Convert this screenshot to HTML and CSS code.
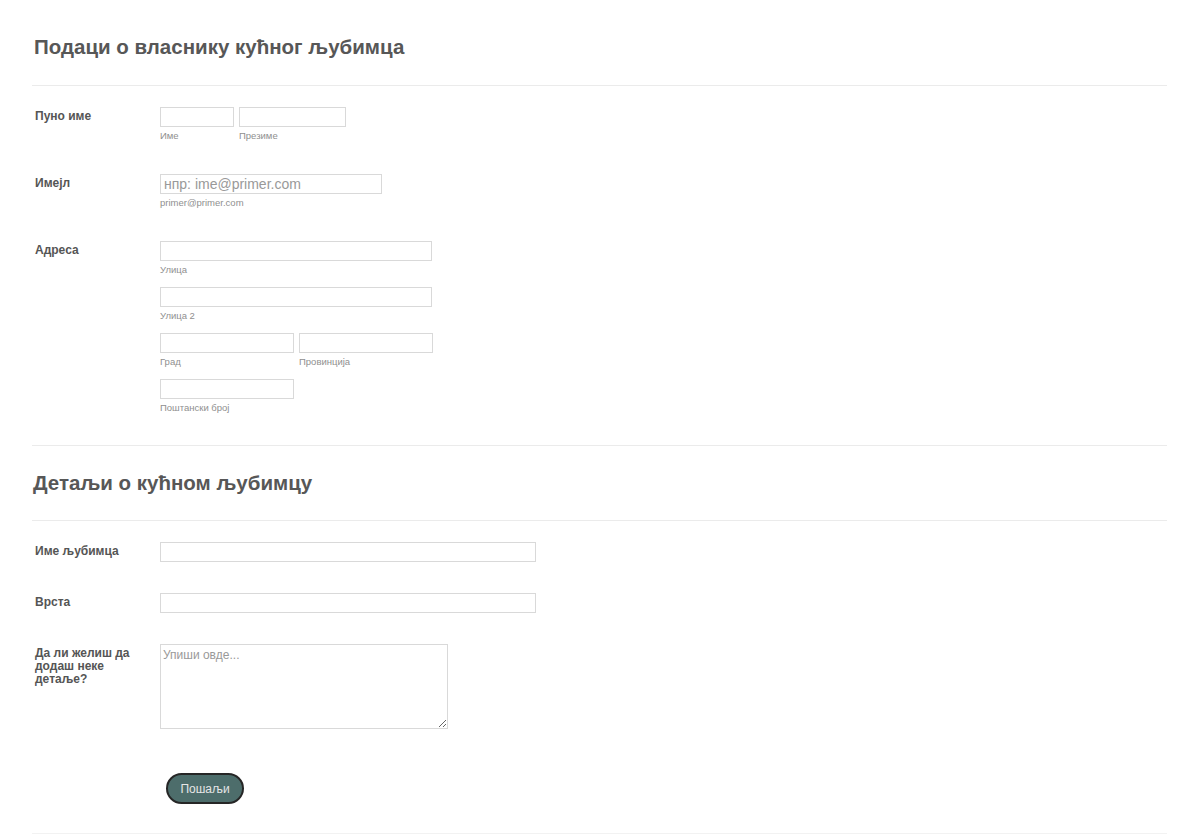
FILE: index.html
```
<!DOCTYPE html>
<html lang="sr">
<head>
<meta charset="utf-8">
<title>Форма</title>
<link rel="stylesheet" href="styles.css">
</head>
<body>
<form class="form">
  <div class="section-head">
    <h2 class="title">Подаци о власнику кућног љубимца</h2>
  </div>

  <div class="row">
    <label class="lbl">Пуно име</label>
    <div class="field">
      <div class="line">
        <div class="part">
          <input class="inp w-first" type="text">
          <span class="sub">Име</span>
        </div>
        <div class="part">
          <input class="inp w-last" type="text">
          <span class="sub">Презиме</span>
        </div>
      </div>
    </div>
  </div>

  <div class="row">
    <label class="lbl">Имејл</label>
    <div class="field">
      <div class="part">
        <input class="inp w-email" type="text" placeholder="нпр: ime@primer.com">
        <span class="sub">primer@primer.com</span>
      </div>
    </div>
  </div>

  <div class="row row-address">
    <label class="lbl">Адреса</label>
    <div class="field">
      <div class="part">
        <input class="inp w-street" type="text">
        <span class="sub">Улица</span>
      </div>
      <div class="part next">
        <input class="inp w-street" type="text">
        <span class="sub">Улица 2</span>
      </div>
      <div class="line next">
        <div class="part">
          <input class="inp w-city" type="text">
          <span class="sub">Град</span>
        </div>
        <div class="part">
          <input class="inp w-city" type="text">
          <span class="sub">Провинција</span>
        </div>
      </div>
      <div class="part next">
        <input class="inp w-city" type="text">
        <span class="sub">Поштански број</span>
      </div>
    </div>
  </div>

  <div class="section-head second">
    <h2 class="title">Детаљи о кућном љубимцу</h2>
  </div>

  <div class="row row-tight">
    <label class="lbl">Име љубимца</label>
    <div class="field">
      <input class="inp w-long" type="text">
    </div>
  </div>

  <div class="row row-tight">
    <label class="lbl">Врста</label>
    <div class="field">
      <input class="inp w-long" type="text">
    </div>
  </div>

  <div class="row row-tight">
    <label class="lbl">Да ли желиш да додаш неке детаље?</label>
    <div class="field">
      <textarea class="area" placeholder="Упиши овде..."></textarea>
    </div>
  </div>

  <div class="submit-row">
    <button class="btn" type="button">Пошаљи</button>
  </div>
</form>
</body>
</html>
```

FILE: styles.css
```
* {
  box-sizing: border-box;
}

html, body {
  margin: 0;
  padding: 0;
  background: #ffffff;
}

body {
  font-family: "Liberation Sans", Arial, sans-serif;
  color: #555555;
}

.form {
  width: 1135px;
  margin-left: 32px;
  padding-top: 10px;
}

.section-head {
  padding: 25px 0 26px 2px;
  border-bottom: 1px solid #ebebeb;
}

.section-head.second {
  border-top: 1px solid #ebebeb;
  padding: 25px 0 25px 1px;
}

.title {
  margin: 0;
  font-size: 20.5px;
  line-height: 24px;
  font-weight: bold;
  color: #575757;
}

.row {
  display: flex;
  padding: 21px 0 11px;
}

.row-address {
  padding-bottom: 31px;
}

.row-tight {
  padding-bottom: 10px;
}

.lbl {
  flex: none;
  width: 128px;
  padding: 3px 20px 0 3px;
  font-size: 12px;
  line-height: 13px;
  font-weight: bold;
  color: #555555;
}

.field {
  display: flex;
  flex-direction: column;
}

.line {
  display: flex;
  gap: 5px;
}

.part {
  display: flex;
  flex-direction: column;
}

.next {
  margin-top: 11px;
}

.inp {
  height: 20px;
  margin: 0;
  padding: 0 3px;
  border: 1px solid #d9d9d9;
  border-radius: 0;
  background: #ffffff;
  font-family: "Liberation Sans", Arial, sans-serif;
  font-size: 14px;
  color: #555555;
  outline: none;
}

.inp::placeholder,
.area::placeholder {
  color: #999999;
}

.w-first { width: 74px; }
.w-last { width: 107px; }
.w-email { width: 222px; }
.w-street { width: 272px; }
.w-city { width: 134px; }
.w-long { width: 376px; }

.sub {
  margin-top: 3px;
  font-size: 9.5px;
  line-height: 12px;
  color: #8f8f8f;
}

.area {
  display: block;
  width: 288px;
  height: 85px;
  margin: 0;
  padding: 3px 2px;
  border: 1px solid #d9d9d9;
  border-radius: 0;
  font-family: "Liberation Sans", Arial, sans-serif;
  font-size: 12px;
  color: #555555;
  outline: none;
}

.submit-row {
  padding: 34px 0 29px 134px;
  border-bottom: 1px solid #f2f2f2;
}

.btn {
  display: block;
  width: 78px;
  height: 31px;
  margin: 0;
  padding: 0;
  border: 2px solid #262626;
  border-radius: 16px;
  background: #4d6d6b;
  color: #e6e6e6;
  font-family: "Liberation Sans", Arial, sans-serif;
  font-size: 12px;
  cursor: pointer;
}
```
